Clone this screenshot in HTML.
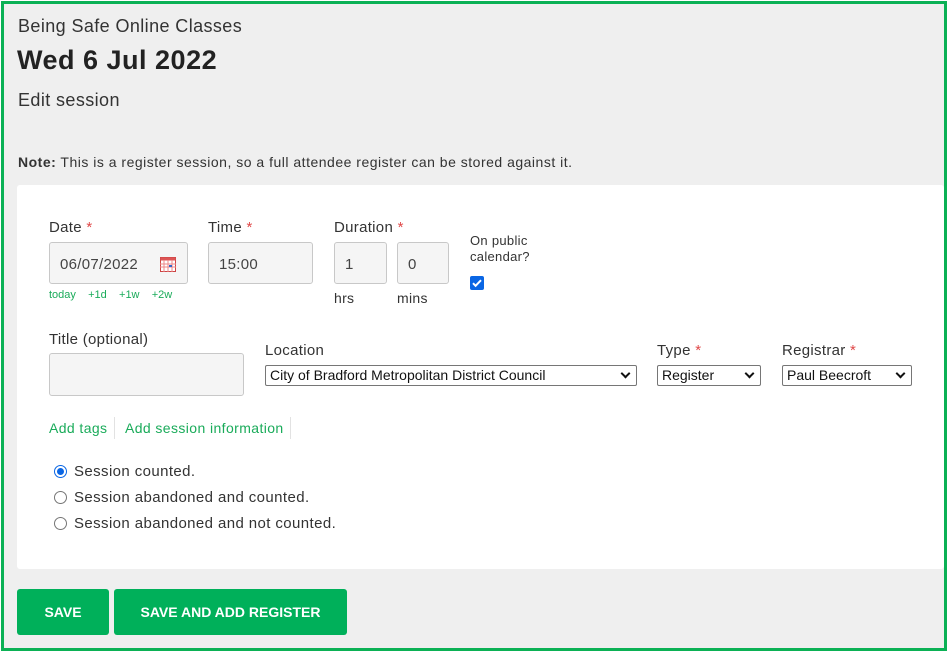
<!DOCTYPE html>
<html><head><meta charset="utf-8"><style>
*{box-sizing:border-box;margin:0;padding:0}
body{width:948px;height:653px;background:#fff;font-family:"Liberation Sans",Arial,sans-serif;color:#333;position:relative;overflow:hidden}
#frame{position:absolute;left:1px;top:1px;width:946px;height:650px;background:#efefef;border:3px solid #0bb155;overflow:hidden}
.a{position:absolute;white-space:nowrap}
.ls{letter-spacing:0.4px}
.req{color:#e04848}
.lbl{font-size:15px;color:#333;letter-spacing:0.3px}
.inp{position:absolute;background:#f5f5f5;border:1px solid #c8c8c8;border-radius:3px;font-size:15px;color:#444;padding-left:10px;line-height:44px;height:42px;letter-spacing:0.3px}
.sel{position:absolute;height:21px;border:1px solid #767676;border-radius:2px;background:#fff;font-size:14px;color:#111;line-height:19px;padding-left:4px}
.sel:after{content:"";position:absolute;right:7px;top:4px;width:5px;height:5px;border-right:2px solid #111;border-bottom:2px solid #111;transform:rotate(45deg)}
.g{color:#1aab5a}
.btn{position:absolute;background:#00b05a;color:#fff;font-weight:bold;font-size:14px;text-align:center;line-height:46px;height:46px;border-radius:3px;top:589px}
.rad{position:absolute;width:13px;height:13px;border:1px solid #767676;border-radius:50%;background:#fff}
</style></head><body>
<div id="frame"></div>
<div class="a ls" style="left:18px;top:16px;font-size:18px;color:#333">Being Safe Online Classes</div>
<div class="a" style="left:17px;top:45px;font-size:27px;font-weight:bold;color:#222;letter-spacing:0.5px">Wed 6 Jul 2022</div>
<div class="a ls" style="left:18px;top:90px;font-size:18px;color:#333">Edit session</div>
<div class="a" style="left:18px;top:154px;font-size:14px;color:#333;letter-spacing:0.5px"><b>Note:</b> This is a register session, so a full attendee register can be stored against it.</div>
<div class="a" style="left:17px;top:185px;width:927px;height:384px;background:#fff;border-radius:3px"></div>

<div class="a lbl" style="left:49px;top:219px">Date <span class="req">*</span></div>
<div class="inp" style="left:49px;top:242px;width:139px">06/07/2022</div>
<svg class="a" style="left:160px;top:256px" width="16" height="16" viewBox="0 0 16 16"><rect x="0.5" y="1.5" width="15" height="14" fill="#fff" stroke="#c44"/><rect x="0.5" y="1.5" width="15" height="3" fill="#d55"/><path d="M0 8h16M0 11h16M4 4v12M8 4v12M12 4v12" stroke="#e88" stroke-width="1"/><rect x="9" y="9" width="3" height="2" fill="#36c"/></svg>
<div class="a g" style="left:49px;top:289px;font-size:11px">today&nbsp;&nbsp;&nbsp; +1d&nbsp;&nbsp;&nbsp; +1w&nbsp;&nbsp;&nbsp; +2w</div>

<div class="a lbl" style="left:208px;top:219px">Time <span class="req">*</span></div>
<div class="inp" style="left:208px;top:242px;width:105px">15:00</div>

<div class="a lbl" style="left:334px;top:219px">Duration <span class="req">*</span></div>
<div class="inp" style="left:334px;top:242px;width:53px">1</div>
<div class="inp" style="left:397px;top:242px;width:52px">0</div>
<div class="a lbl" style="left:334px;top:290px;font-size:14px">hrs</div>
<div class="a lbl" style="left:397px;top:290px;font-size:14px">mins</div>

<div class="a" style="left:470px;top:233px;font-size:13px;line-height:16px;color:#333;letter-spacing:0.3px">On public<br>calendar?</div>
<div class="a" style="left:470px;top:276px;width:14px;height:14px;background:#0a66e4;border-radius:2px"><svg width="14" height="14" viewBox="0 0 14 14"><path d="M3 7.2l2.6 2.6L11 4.2" stroke="#fff" stroke-width="2" fill="none"/></svg></div>

<div class="a lbl" style="left:49px;top:331px">Title (optional)</div>
<div class="inp" style="left:49px;top:353px;width:195px;height:43px"></div>

<div class="a lbl" style="left:265px;top:342px">Location</div>
<div class="sel" style="left:265px;top:365px;width:372px">City of Bradford Metropolitan District Council</div>
<div class="a lbl" style="left:657px;top:342px">Type <span class="req">*</span></div>
<div class="sel" style="left:657px;top:365px;width:104px">Register</div>
<div class="a lbl" style="left:782px;top:342px">Registrar <span class="req">*</span></div>
<div class="sel" style="left:782px;top:365px;width:130px">Paul Beecroft</div>

<div class="a g ls" style="left:49px;top:420px;font-size:14px">Add tags</div>
<div class="a" style="left:114px;top:417px;width:1px;height:22px;background:#e2e2e2"></div>
<div class="a g ls" style="left:125px;top:420px;font-size:14px">Add session information</div>
<div class="a" style="left:290px;top:417px;width:1px;height:22px;background:#e2e2e2"></div>

<div class="rad" style="left:54px;top:465px;border:1px solid #0a66e4"><div style="margin:2px;width:7px;height:7px;border-radius:50%;background:#0a66e4"></div></div>
<div class="a ls" style="left:74px;top:463px;font-size:15px">Session counted.</div>
<div class="rad" style="left:54px;top:491px"></div>
<div class="a ls" style="left:74px;top:489px;font-size:15px">Session abandoned and counted.</div>
<div class="rad" style="left:54px;top:517px"></div>
<div class="a ls" style="left:74px;top:515px;font-size:15px">Session abandoned and not counted.</div>

<div class="btn" style="left:17px;width:92px">SAVE</div>
<div class="btn" style="left:114px;width:233px">SAVE AND ADD REGISTER</div>
</body></html>
